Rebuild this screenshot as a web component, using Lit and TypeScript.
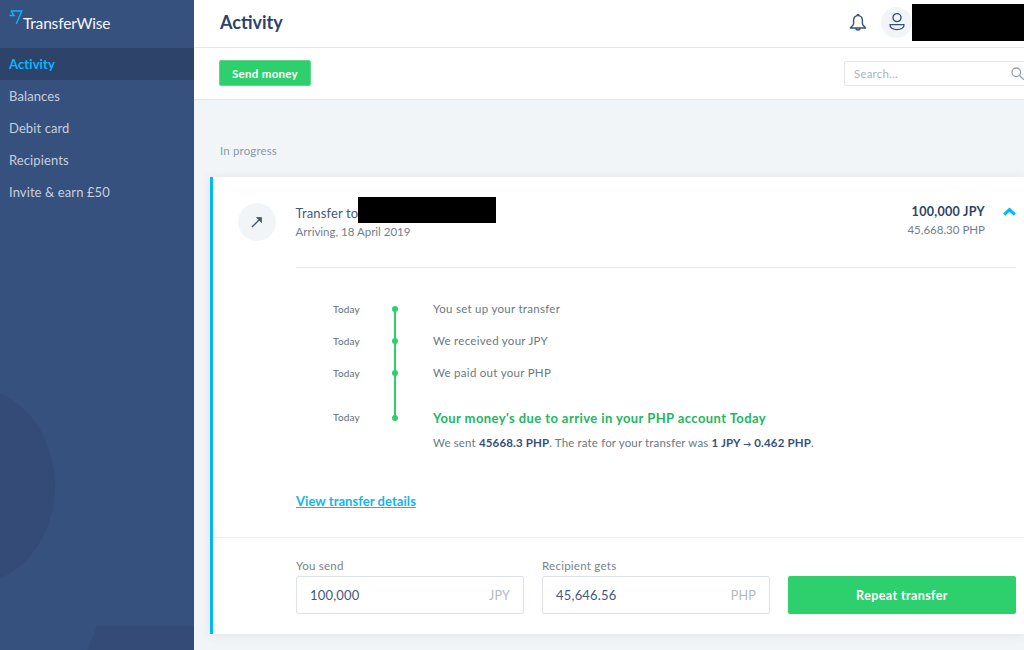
import { LitElement, html, css } from "lit";
import { customElement } from "lit/decorators.js";

const steps = [
  { t: "You set up your transfer" },
  { t: "We received your JPY" },
  { t: "We paid out your PHP" },
];

@customElement("app-root")
export class AppRoot extends LitElement {
  static styles = css`
    :host { display: flex; width: 1024px; height: 650px; overflow: hidden; font-family: Lato, "Open Sans", sans-serif; background: #f2f5f7; color: #37517e; font-size: 12px; }
    * { box-sizing: border-box; }
    .side { width: 194px; flex: none; background: #37517e; position: relative; overflow: hidden; }
    .deco1 { position: absolute; left: -110px; top: 388px; width: 165px; height: 196px; border-radius: 50%; background: #334b76; }
    .deco2 { position: absolute; left: 89px; top: 626px; width: 130px; height: 40px; background: #334b76; transform: skewX(-22deg); }
    .logo { height: 48px; display: flex; align-items: flex-start; padding: 9px 0 0 9px; position: relative; z-index: 1; }
    .logo svg { width: 14px; height: 16px; flex: none; }
    .logo span { font-size: 15.5px; color: #f4f6f9; margin: 4px 0 0 0; line-height: 20px; font-weight: 400; letter-spacing: -0.18px; }
    nav { position: relative; z-index: 1; }
    nav a { display: block; height: 32px; line-height: 32px; padding-left: 9px; font-size: 13px; color: #c5cfdd; letter-spacing: 0.1px; }
    nav a.on { background: #2e4369; color: #00b9ff; font-weight: 700; font-size: 13px; letter-spacing: 0.1px; }
    .main { flex: 1; min-width: 0; display: flex; flex-direction: column; }
    .head { height: 48px; background: #fff; border-bottom: 1px solid #e6e9ec; display: flex; align-items: center; padding-left: 26px; }
    h1 { margin: -4px 0 0; font-size: 18px; font-weight: 700; color: #2e4369; flex: 1; letter-spacing: 0; }
    .bell { width: 20px; height: 20px; margin-right: 13px; margin-top: -1px; }
    .avatar { width: 31px; height: 31px; border-radius: 50%; background: #f2f5f7; display: flex; align-items: center; justify-content: center; flex: none; margin-top: -3px; }
    .avatar svg { width: 18px; height: 20px; }
    .redact { background: #000; flex: none; }
    .r1 { width: 112px; height: 37px; margin-top: -2px; }
    .bar { height: 52px; background: #fff; border-bottom: 1px solid #e3e7eb; display: flex; align-items: center; justify-content: space-between; padding-left: 25px; }
    .send { width: 92px; height: 26px; background: #2ed06e; color: #fff; font-weight: 700; font-size: 11.5px; border-radius: 2px; display: flex; align-items: center; justify-content: center; letter-spacing: 0.3px; margin-top: -1px; border: 1px solid #5adb8c; }
    .search { width: 191px; height: 25px; flex: none; margin-right: -11px; border: 1px solid #e3e5e8; border-radius: 2px; display: flex; align-items: center; padding-left: 9px; color: #aeb4ba; font-size: 11.5px; letter-spacing: 0.2px; position: relative; margin-top: -1px; }
    .search span { flex: 1; }
    .search svg { width: 13px; height: 13px; margin-right: 10px; flex: none; }
    .body { padding: 44px 0 0 16px; flex: 1; min-height: 0; }
    .label { color: #8c9aa8; font-size: 11.5px; padding-left: 10px; line-height: 14px; letter-spacing: 0.15px; height: 33px; }
    .card { background: #fff; border-left: 3px solid #00b9f0; height: 457px; box-shadow: 0 1px 10px rgba(55, 81, 126, 0.1); display: flex; flex-direction: column; }
    .top { display: flex; padding: 26px 8px 0 25px; height: 90px; align-items: flex-start; }
    .circle { width: 38px; height: 38px; border-radius: 50%; background: #f2f5f7; display: flex; align-items: center; justify-content: center; flex: none; margin-right: 20px; }
    .circle svg { width: 12px; height: 12px; }
    .who { flex: 1; }
    .to { display: flex; align-items: center; font-size: 13px; height: 26px; margin-top: -6px; color: #44597f; letter-spacing: 0.15px; margin-left: -0.5px; }
    .to span { padding-top: 6px; }
    .r2 { width: 138px; height: 26px; }
    .arr { font-size: 11.5px; color: #71808f; line-height: 16px; margin-top: 1px; letter-spacing: 0; margin-left: -0.5px; }
    .amt { text-align: right; margin-right: 18px; padding-top: 0; }
    .amt b { display: block; font-size: 12.5px; color: #2e4369; line-height: 18px; letter-spacing: 0.3px; }
    .amt span { display: block; font-size: 11.5px; color: #71808f; line-height: 18px; letter-spacing: 0; }
    .chev { width: 13px; height: 9px; margin-top: 4px; flex: none; }
    .rule { height: 1px; background: #e6e8ea; margin: 0 8px 0 83px; flex: none; }
    .tl { padding: 25px 0 0 0; position: relative; }
    .row { display: grid; grid-template-columns: 148px 72px 1fr; height: 32px; align-items: start; position: relative; }
    .row.last { height: auto; margin-top: 13px; }
    .date { font-size: 10px; color: #5d6b78; text-align: right; line-height: 32px; height: 32px; letter-spacing: 0.2px; }
    .row.last .date { line-height: 30px; }
    .date span { display: inline-block; width: 28px; text-align: left; }
    .node { position: relative; height: 32px; }
    .node i { position: absolute; left: 31px; top: 13px; width: 6px; height: 6px; border-radius: 50%; background: #2ed06e; }
    .node::after { content: ""; position: absolute; left: 33px; top: 16px; width: 2px; height: 32px; background: #2ed06e; }
    .row.third .node::after { height: 45px; }
    .row.last .node::after { display: none; }
    .msg { font-size: 11.5px; color: #6b7885; line-height: 32px; letter-spacing: 0.28px; }
    .msg.head2 { color: #21b760; font-weight: 700; font-size: 13px; letter-spacing: 0.42px; }
    .note { line-height: 18px; font-size: 11.5px; color: #6b7885; letter-spacing: 0.15px; }
    .note b { color: #37517e; }
    .note small { font-size: 8px; }
    .link { font-size: 13px; font-weight: 700; color: #14b4ee; text-decoration: underline; margin: 39px 0 0 83px; line-height: 18px; letter-spacing: 0.05px; height: 18px; }
    .foot { margin-top: auto; border-top: 1px solid #eceef0; height: 97px; padding: 20px 8px 0 83px; display: flex; gap: 18px; }
    .field { width: 228px; flex: none; }
    .field label { display: block; font-size: 11.5px; color: #76828e; line-height: 16px; height: 18px; letter-spacing: 0.25px; }
    .box { height: 38px; border: 1px solid #dfe2e6; border-radius: 2px; display: flex; justify-content: space-between; align-items: center; padding: 0 13px; font-size: 13px; color: #44597f; letter-spacing: 0.2px; }
    .box span { color: #b3b9bf; font-size: 12.5px; }
    .btn { width: 228px; height: 38px; margin-top: 18px; padding-top: 1px; border-radius: 2px; background: #2ed06e; color: #fff; font-weight: 700; font-size: 12.5px; display: flex; align-items: center; justify-content: center; letter-spacing: 0.4px; }
  `;

  render() {
    return html`
      <aside class="side">
        <div class="deco1"></div>
        <div class="deco2"></div>
        <div class="logo">
          <svg viewBox="0 0 14 16" fill="none" stroke="#00b9ff" stroke-width="1.4" stroke-linejoin="miter">
            <path d="M2 2H12.800L7.200 15" />
            <path d="M2 2L5 6.500H0.500" />
          </svg>
          <span>TransferWise</span>
        </div>
        <nav>
          <a class="on">Activity</a>
          <a>Balances</a>
          <a>Debit card</a>
          <a>Recipients</a>
          <a>Invite &amp; earn £50</a>
        </nav>
      </aside>
      <div class="main">
        <header class="head">
          <h1>Activity</h1>
          <svg class="bell" viewBox="0 0 20 20" fill="none" stroke="#37517e" stroke-width="1.4" stroke-linejoin="round" stroke-linecap="round">
            <path d="M10 2.600c-3 0-4.400 2.200-4.400 5v2.600c0 2-1.600 3-3.200 4.800h15.200c-1.600-1.800-3.200-2.800-3.200-4.800V7.600c0-2.800-1.400-5-4.400-5z" />
            <path d="M9 2.400c0-1.200 2-1.200 2 0M8 15.200c0 2.400 4 2.400 4 0" />
          </svg>
          <div class="avatar">
            <svg viewBox="0 0 18 20" fill="none" stroke="#37517e" stroke-width="1.4">
              <circle cx="9" cy="5.600" r="4" />
              <path d="M2 12.600h14c.3 3-3 5-7 5s-7.300-2-7-5z" stroke-linejoin="round" />
            </svg>
          </div>
          <div class="redact r1"></div>
        </header>
        <div class="bar">
          <div class="send">Send money</div>
          <div class="search">
            <span>Search...</span>
            <svg viewBox="0 0 13 13" fill="none" stroke="#9aa3ab" stroke-width="1.3" stroke-linecap="round">
              <circle cx="5.300" cy="5.300" r="4.300" /><path d="M8.500 8.500L12.300 12.300" />
            </svg>
          </div>
        </div>
        <div class="body">
          <div class="label">In progress</div>
          <section class="card">
            <div class="top">
              <div class="circle">
                <svg viewBox="0 0 12 12" fill="#44597f" stroke="#44597f" stroke-width="1.300">
                  <path d="M1 11L9.500 2.500" fill="none" />
                  <path d="M5.500 1.500h5v5z" stroke-width="0.800" />
                </svg>
              </div>
              <div class="who">
                <div class="to"><span>Transfer to</span><div class="redact r2"></div></div>
                <div class="arr">Arriving, 18 April 2019</div>
              </div>
              <div class="amt"><b>100,000 JPY</b><span>45,668.30 PHP</span></div>
              <svg class="chev" viewBox="0 0 13 9" fill="none" stroke="#00b9ff" stroke-width="3">
                <path d="M1.200 7.600L6.500 2.600L11.800 7.600" />
              </svg>
            </div>
            <div class="rule"></div>
            <div class="tl">
              ${steps.map(
                (s, i) => html`
                  <div class="row ${i === 2 ? "third" : ""}">
                    <div class="date"><span>Today</span></div>
                    <div class="node"><i></i></div>
                    <div class="msg">${s.t}</div>
                  </div>
                `
              )}
              <div class="row last">
                <div class="date"><span>Today</span></div>
                <div class="node"><i></i></div>
                <div>
                  <div class="msg head2">Your money's due to arrive in your PHP account Today</div>
                  <div class="note">We sent <b>45668.3 PHP</b>. The rate for your transfer was <b>1 JPY <small>→</small> 0.462 PHP</b>.</div>
                </div>
              </div>
            </div>
            <div class="link">View transfer details</div>
            <div class="foot">
              <div class="field"><label>You send</label><div class="box">100,000<span>JPY</span></div></div>
              <div class="field"><label>Recipient gets</label><div class="box">45,646.56<span>PHP</span></div></div>
              <div class="btn">Repeat transfer</div>
            </div>
          </section>
        </div>
      </div>
    `;
  }
}
